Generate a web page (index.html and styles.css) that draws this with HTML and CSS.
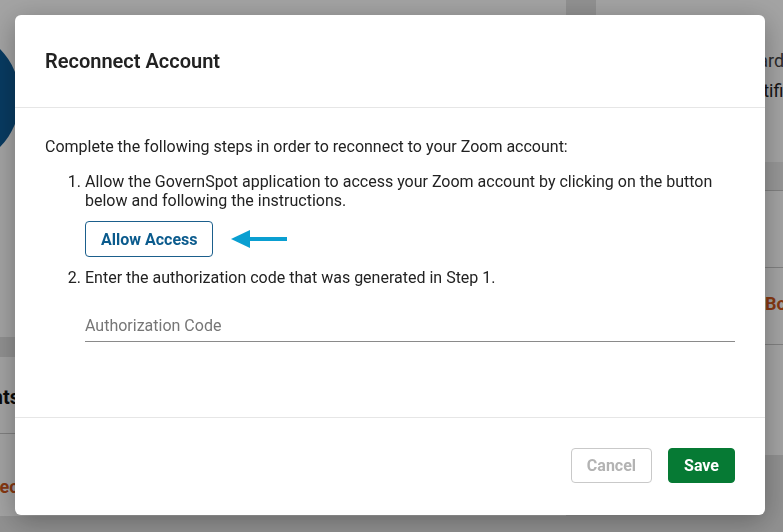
FILE: index.html
```html
<!DOCTYPE html>
<html lang="en">
<head>
    <meta charset="UTF-8">
    <meta name="viewport" content="width=device-width, initial-scale=1.0">
    <title>Reconnect Account</title>
    <link rel="stylesheet" href="styles.css">
</head>
<body>
    <div class="page">
        <div class="col col-left">
            <section class="card card-profile">
                <div class="avatar"></div>
            </section>
            <section class="card card-list">
                <h2 class="card-title">Events</h2>
                <div class="list-row">
                    <a class="link" href="#">Reconnect</a>
                </div>
            </section>
        </div>
        <div class="col col-right">
            <section class="card card-plan">
                <div class="plan-info">
                    <p class="plan-line plan-first">Dashboard</p>
                    <p class="plan-line plan-strong">Email Notifications</p>
                </div>
                <div class="table-head"></div>
                <div class="table-row"></div>
                <div class="table-row">
                    <a class="link" href="#">Board Meeting</a>
                </div>
            </section>
        </div>
    </div>

    <div class="overlay">
        <div class="modal">
            <div class="modal-header">
                <h3 class="modal-title">Reconnect Account</h3>
            </div>

            <div class="modal-body">
                <p class="intro">Complete the following steps in order to reconnect to your Zoom account:</p>
                <ol class="steps">
                    <li>
                        Allow the GovernSpot application to access your Zoom account by clicking on the button below and following the instructions.
                        <div class="access-row">
                            <button class="btn btn-outline">Allow Access</button>
                            <svg class="arrow" width="56" height="20" viewBox="0 0 56 20">
                                <polygon points="0,10 19,1 19,19" fill="#0a9fd1"/>
                                <rect x="18" y="8" width="38" height="4" fill="#0a9fd1"/>
                            </svg>
                        </div>
                    </li>
                    <li>
                        Enter the authorization code that was generated in Step 1.
                        <input class="code-input" type="text" placeholder="Authorization Code">
                    </li>
                </ol>
            </div>

            <div class="modal-footer">
                <button class="btn btn-cancel" disabled>Cancel</button>
                <button class="btn btn-save">Save</button>
            </div>
        </div>
    </div>
</body>
</html>
```

FILE: styles.css
```css
body {
    margin: 0;
    font-family: Roboto, "Liberation Sans", Arial, sans-serif;
    background-color: #e2e2e2;
    height: 100vh;
    overflow: hidden;
}

/* page behind the dialog */
.page {
    display: flex;
    gap: 30px;
    margin-left: -120px;
}

.col {
    display: flex;
    flex-direction: column;
    gap: 20px;
}

.col-left {
    width: 686px;
    flex-shrink: 0;
}

.col-right {
    width: 400px;
    flex-shrink: 0;
}

.card {
    background: white;
    overflow: hidden;
}

.card-profile {
    height: 337px;
}

.avatar {
    width: 140px;
    height: 140px;
    border-radius: 50%;
    background: #0d5c98;
    margin-top: 28px;
}

.card-list {
    height: 159px;
}

.card-title {
    margin: 0;
    padding: 28px 0 0 80px;
    height: 48px;
    font-size: 20px;
    font-weight: bold;
    color: #111;
    border-bottom: 1px solid #c8c8c8;
}

.list-row {
    padding: 42px 0 0 108px;
}

.link {
    color: #d2581c;
    font-weight: bold;
    font-size: 18px;
    text-decoration: none;
}

.card-plan {
    height: 455px;
}

.plan-info {
    height: 162px;
    padding-left: 95px;
    box-sizing: border-box;
}

.plan-line {
    margin: 0;
    font-size: 18px;
    color: #444;
    line-height: 30px;
}

.plan-first {
    padding: 46px 0 0 6px;
}

.plan-strong {
    color: #222;
}

.table-head {
    height: 28px;
    background: #ececec;
    border-bottom: 1px solid #c8c8c8;
}

.table-row {
    height: 76px;
    border-bottom: 1px solid #c8c8c8;
}

.table-row .link {
    display: block;
    padding: 25px 0 0 169px;
}

/* dialog */
.overlay {
    position: fixed;
    inset: 0;
    background: rgba(0, 0, 0, 0.36);
}

.modal {
    width: 750px;
    margin: 15px 0 0 15px;
    background: white;
    border-radius: 6px;
    box-shadow: 0 6px 28px rgba(0, 0, 0, 0.3);
    color: #222;
    font-size: 16px;
    line-height: 19px;
}

.modal-header {
    height: 92px;
    padding: 0 30px;
    display: flex;
    align-items: center;
    border-bottom: 1px solid #e6e6e6;
}

.modal-title {
    margin: 0;
    font-size: 20px;
    font-weight: 600;
    color: #222;
}

.modal-body {
    padding: 29px 30px 75px;
}

.intro {
    margin: 0;
}

.steps {
    margin: 16px 0 0;
    padding-left: 40px;
}

.access-row {
    display: flex;
    align-items: center;
    gap: 18px;
    margin: 11px 0 11px;
}

.btn {
    font-family: inherit;
    font-size: 16px;
    font-weight: bold;
    height: 35px;
    padding: 0 15px;
    border-radius: 4px;
    cursor: pointer;
}

.btn-outline {
    height: 36px;
    background: white;
    color: #0b5b8d;
    border: 1px solid #1b5f8c;
}

.code-input {
    display: block;
    width: 100%;
    box-sizing: border-box;
    margin-top: 19px;
    padding: 10px 0 6px;
    font-family: inherit;
    font-size: 16px;
    line-height: 19px;
    color: #222;
    border: none;
    border-bottom: 1px solid #8a8a8a;
    outline: none;
}

.code-input::placeholder {
    color: #767676;
}

.modal-footer {
    display: flex;
    justify-content: flex-end;
    gap: 16px;
    padding: 30px 30px 32px;
    border-top: 1px solid #e6e6e6;
}

.btn-cancel {
    background: white;
    color: #b3b3b3;
    border: 1px solid #c9c9c9;
    cursor: default;
}

.btn-save {
    background: #067a34;
    color: white;
    border: 1px solid #067a34;
}
```
